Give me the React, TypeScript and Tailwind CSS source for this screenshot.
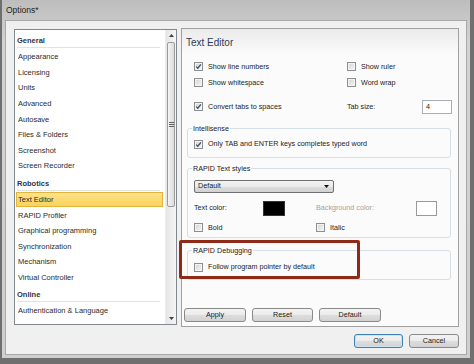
import { ReactNode } from 'react'

// Options dialog – Text Editor page

const groups = [
  {
    title: 'General',
    items: ['Appearance', 'Licensing', 'Units', 'Advanced', 'Autosave', 'Files & Folders', 'Screenshot', 'Screen Recorder'],
  },
  {
    title: 'Robotics',
    items: ['Text Editor', 'RAPID Profiler', 'Graphical programming', 'Synchronization', 'Mechanism', 'Virtual Controller'],
  },
  { title: 'Online', items: ['Authentication & Language'] },
]

const selected = 'Text Editor'

function CheckBox({ checked = false }: { checked?: boolean }) {
  return (
    <span className="flex items-center justify-center w-[9px] h-[9px] shrink-0 border border-[#8e8f8f] bg-[linear-gradient(135deg,#d3d3d3,#f7f7f7)] shadow-[inset_0_0_0_1px_#f3f3f3]">
      {checked && (
        <svg width="7" height="7" viewBox="0 0 7 7">
          <path d="M1.2 3.6 L2.8 5.2 L5.9 1.4" fill="none" stroke="#3b4d6e" strokeWidth="1.3" />
        </svg>
      )}
    </span>
  )
}

function Option({ label, checked, className = '' }: { label: string; checked?: boolean; className?: string }) {
  return (
    <div className={`flex items-center gap-[5px] ${className}`}>
      <CheckBox checked={checked} />
      <span>{label}</span>
    </div>
  )
}

function Button({ children, className = '', focused }: { children: ReactNode; className?: string; focused?: boolean }) {
  return (
    <div
      className={`h-[14px] flex items-center justify-center rounded-[3px] border text-[7.2px] text-[#1b1b1b] bg-[linear-gradient(to_bottom,#f3f3f3_0%,#ebebeb_50%,#dddddd_51%,#d2d2d2_100%)] ${
        focused ? 'border-[#3c7fb1] shadow-[inset_0_0_0_1px_#c8e6f6]' : 'border-[#8a8a8a]'
      } ${className}`}
    >
      {children}
    </div>
  )
}

function GroupBox({ title, children, className = '' }: { title: string; children: ReactNode; className?: string }) {
  return (
    <fieldset className={`ml-[5px] w-[264px] border border-[#d5dfe5] rounded-[3px] px-[6px] ${className}`}>
      <legend className="ml-[-2px] px-[1px] leading-[9px] text-[7.2px] text-[#1b1b1b]">{title}</legend>
      {children}
    </fieldset>
  )
}

function ScrollArrow({ down }: { down?: boolean }) {
  return (
    <div className="h-[11px] flex items-center justify-center">
      <svg width="5" height="3" viewBox="0 0 5 3">
        <path d={down ? 'M0 0 L5 0 L2.5 3Z' : 'M0 3 L5 3 L2.5 0Z'} fill="#404040" />
      </svg>
    </div>
  )
}

function NavList() {
  return (
    <div className="mt-[1px] w-[163px] h-[296px] border border-[#828790] bg-white flex text-[7.5px] text-[#2b2b2b]">
      <div className="w-[150px] pl-[1px] pr-[2px] pt-[1px] flex flex-col">
        {groups.map((g) => (
          <div key={g.title} className="flex flex-col">
            <div className="pt-[4px] mb-[1px] ml-[1px] mr-[3px] border-b border-[#e2e2e2]">
              <div className="h-[12px] leading-[12px] font-bold text-[#283548]">{g.title}</div>
              <div className="h-[0px]" />
            </div>
            {g.items.map((item) =>
              item === selected ? (
                <div
                  key={item}
                  className="h-[15.6px] flex items-center pl-[1px] border border-[#e3b43d] bg-[linear-gradient(to_bottom,#fde28a,#fbd35a)]"
                >
                  {item}
                </div>
              ) : (
                <div key={item} className="h-[15.6px] flex items-center pl-[2px]">
                  {item}
                </div>
              ),
            )}
          </div>
        ))}
      </div>
      <div className="w-[11px] flex flex-col bg-[linear-gradient(to_right,#e6e6e6,#f5f5f5)] border-l border-[#ececec]">
        <ScrollArrow />
        <div className="mt-[1px] mx-[1px] h-[165px] rounded-[2px] border border-[#9b9b9b] bg-[linear-gradient(to_right,#f4f4f4,#dcdcdc)] flex items-center justify-center">
          <svg width="5" height="5" viewBox="0 0 5 5">
            <path d="M0 0.5 H5 M0 2.5 H5 M0 4.5 H5" stroke="#606060" strokeWidth="1" />
          </svg>
        </div>
        <div className="flex-1" />
        <ScrollArrow down />
      </div>
    </div>
  )
}

function EditorPanel() {
  return (
    <div className="relative w-[278px] h-[299px] border border-[#a0a0a0] bg-[#fbfbfb] flex flex-col text-[7.2px] text-[#1b1b1b]">
      <div className="h-[26px] flex items-center pl-[4px] text-[10px] text-[#2b3a55] bg-[linear-gradient(to_bottom,#ebebeb,#fbfbfb)]">
        Text Editor
      </div>

      <div className="mt-[4px] pl-[12px] flex flex-col">
        <div className="h-[16px] flex items-center">
          <Option label="Show line numbers" checked className="w-[153px]" />
          <Option label="Show ruler" />
        </div>
        <div className="h-[16px] flex items-center">
          <Option label="Show whitespace" className="w-[153px]" />
          <Option label="Word wrap" />
        </div>
        <div className="mt-[9px] h-[14px] flex items-center">
          <Option label="Convert tabs to spaces" checked className="w-[153px]" />
          <span className="w-[75px]">Tab size:</span>
          <div className="w-[30px] h-[14px] border border-[#abadb3] bg-white flex items-center pl-[3px]">4</div>
        </div>
      </div>

      <GroupBox title="Intellisense" className="mt-[10px] pt-[4px] pb-[6px]">
        <Option label="Only TAB and ENTER keys completes typed word" checked className="h-[14px]" />
      </GroupBox>

      <GroupBox title="RAPID Text styles" className="mt-[6px] pt-[7px] pb-[3px]">
        <div className="w-[140px] h-[13px] flex items-center justify-between pl-[3px] pr-[4px] rounded-[2px] border border-[#707070] bg-[linear-gradient(to_bottom,#f3f3f3_0%,#ebebeb_50%,#dddddd_51%,#d2d2d2_100%)]">
          <span>Default</span>
          <svg width="5" height="3" viewBox="0 0 5 3">
            <path d="M0 0 L5 0 L2.5 3Z" fill="#111" />
          </svg>
        </div>
        <div className="mt-[7px] h-[16px] flex items-center">
          <span className="w-[69px]">Text color:</span>
          <div className="w-[22px] h-[15px] bg-black border border-[#333]" />
          <span className="ml-[31px] w-[100px] text-[#a3a3a3]">Background color:</span>
          <div className="w-[21px] h-[15px] bg-white border border-[#9a9a9a]" />
        </div>
        <div className="mt-[6px] h-[12px] flex items-center">
          <Option label="Bold" className="w-[122px]" />
          <Option label="Italic" />
        </div>
      </GroupBox>

      <GroupBox title="RAPID Debugging" className="mt-[8px] pt-[6px] pb-[6px]">
        <Option label="Follow program pointer by default" className="h-[12px]" />
      </GroupBox>

      <div className="mt-[28px] ml-[2px] flex gap-[6px]">
        <Button className="w-[62px]">Apply</Button>
        <Button className="w-[61px]">Reset</Button>
        <Button className="w-[62px]">Default</Button>
      </div>

      {/* highlight marker drawn over the debugging group */}
      <div className="absolute left-[-3px] top-[211px] w-[181px] h-[39px] border-[3px] border-[#8e2a17] rounded-[2px]" />
    </div>
  )
}

export default function App() {
  return (
    <div
      className="w-[474px] h-[364px] flex flex-col overflow-hidden bg-[linear-gradient(to_bottom,#bdbdbd,#d3d3d3_12%,#cfcfcf)] border-r-[4px] border-b-[6px] border-l-[2px] border-[#6f6f6f]"
      style={{ fontFamily: '"Liberation Sans", Arial, sans-serif' }}
    >
      <div className="h-[20px] flex items-center pl-[4px] pt-[1px] text-[8.5px] text-[#1e1e1e]">Options*</div>
      <div className="ml-[3px] w-[462px] h-[335px] border border-[#a8a8a8] bg-[#f0f0f0] flex flex-col pl-[8px] pt-[7px]">
        <div className="flex gap-[4px] items-start">
          <NavList />
          <EditorPanel />
        </div>
        <div className="w-[445px] mt-[7px] flex justify-end gap-[6px]">
          <Button className="w-[49px]" focused>
            OK
          </Button>
          <Button className="w-[50px]">Cancel</Button>
        </div>
      </div>
    </div>
  )
}
